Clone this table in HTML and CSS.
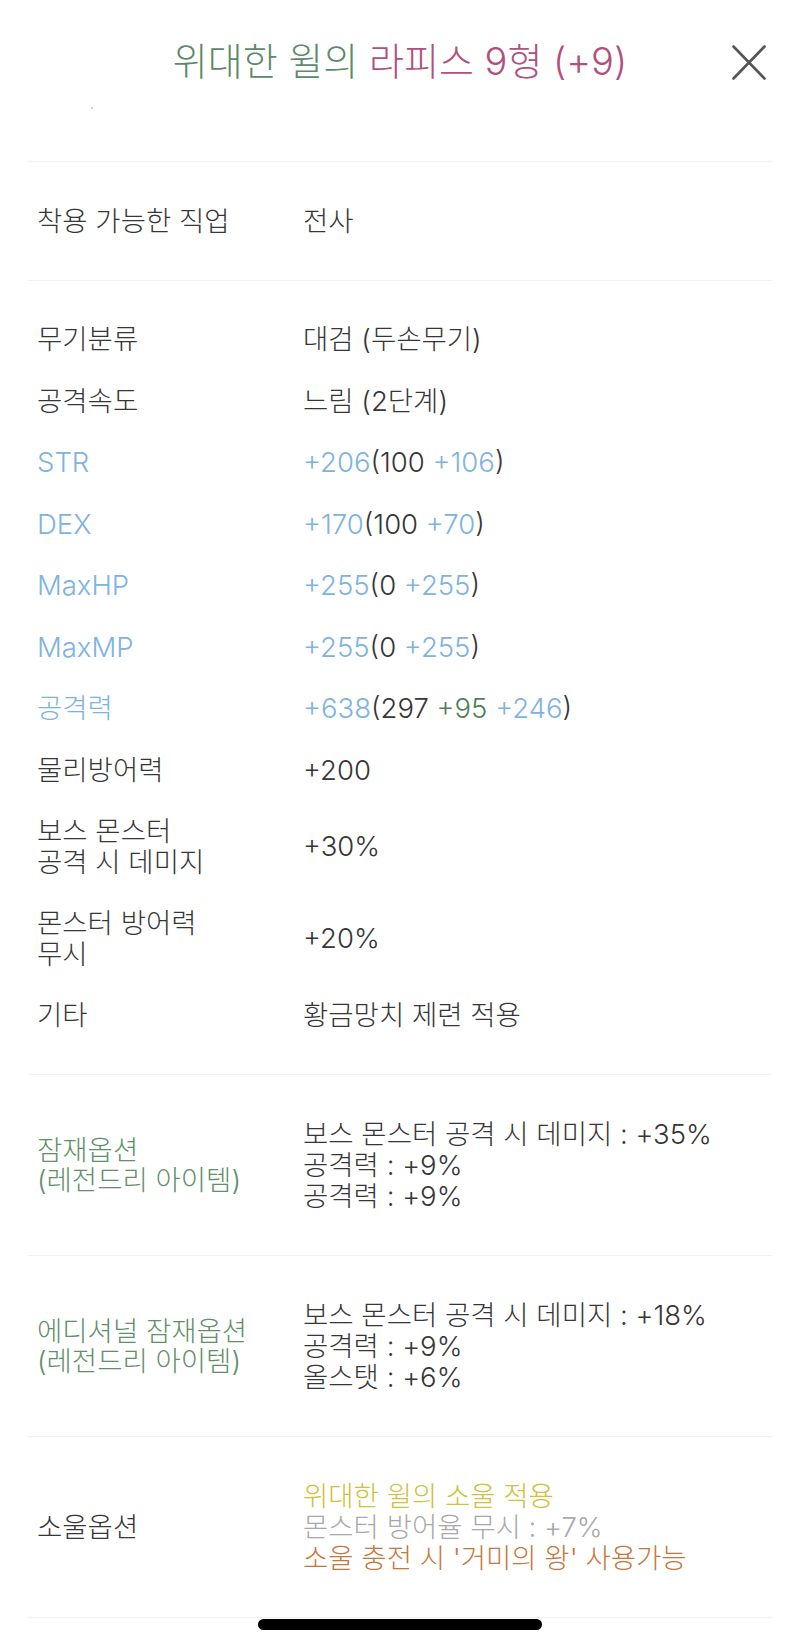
FILE: index.html
```html
<!DOCTYPE html>
<html lang="ko">
<head>
<meta charset="utf-8">
<title>위대한 윌의 라피스 9형 (+9)</title>
<link rel="stylesheet" href="styles.css">
</head>
<body>
<div class="page">
  <header class="header">
    <div class="side"></div>
    <h1 class="title"><span class="t-green">위대한 윌의</span> <span class="t-pink">라피스 9형 (+9)</span></h1>
    <div class="side side-right">
      <button class="close" aria-label="닫기">
        <svg width="34" height="35" viewBox="0 0 34 35"><path d="M1.5 1.5 L32.5 33.5 M32.5 1.5 L1.5 33.5" stroke="#555" stroke-width="2.6" fill="none" stroke-linecap="round"/></svg>
      </button>
    </div>
  </header>
  <div class="dot-line"><span class="dot"></span></div>

  <section class="section">
    <div class="row"><div class="label">착용 가능한 직업</div><div class="value">전사</div></div>
  </section>

  <section class="section">
    <div class="row"><div class="label">무기분류</div><div class="value">대검 (두손무기)</div></div>
    <div class="row"><div class="label">공격속도</div><div class="value">느림 (2단계)</div></div>
    <div class="row"><div class="label blue">STR</div><div class="value"><span class="blue">+206</span>(100 <span class="blue">+106</span>)</div></div>
    <div class="row"><div class="label blue">DEX</div><div class="value"><span class="blue">+170</span>(100 <span class="blue">+70</span>)</div></div>
    <div class="row"><div class="label blue">MaxHP</div><div class="value"><span class="blue">+255</span>(0 <span class="blue">+255</span>)</div></div>
    <div class="row"><div class="label blue">MaxMP</div><div class="value"><span class="blue">+255</span>(0 <span class="blue">+255</span>)</div></div>
    <div class="row"><div class="label blue">공격력</div><div class="value"><span class="blue">+638</span>(297 <span class="green">+95</span> <span class="blue">+246</span>)</div></div>
    <div class="row"><div class="label">물리방어력</div><div class="value">+200</div></div>
    <div class="row"><div class="label">보스 몬스터<br>공격 시 데미지</div><div class="value">+30%</div></div>
    <div class="row"><div class="label">몬스터 방어력<br>무시</div><div class="value">+20%</div></div>
    <div class="row"><div class="label">기타</div><div class="value">황금망치 제련 적용</div></div>
  </section>

  <section class="section">
    <div class="row multi"><div class="label lgreen">잠재옵션<br>(레전드리 아이템)</div><div class="value">보스 몬스터 공격 시 데미지 : +35%<br>공격력 : +9%<br>공격력 : +9%</div></div>
  </section>

  <section class="section">
    <div class="row multi"><div class="label lgreen">에디셔널 잠재옵션<br>(레전드리 아이템)</div><div class="value">보스 몬스터 공격 시 데미지 : +18%<br>공격력 : +9%<br>올스탯 : +6%</div></div>
  </section>

  <section class="section last">
    <div class="row multi"><div class="label">소울옵션</div><div class="value"><span class="yellow">위대한 윌의 소울 적용</span><br><span class="grey">몬스터 방어율 무시 : +7%</span><br><span class="orange">소울 충전 시 '거미의 왕' 사용가능</span></div></div>
  </section>

  <div class="home-bar"></div>
</div>
</body>
</html>
```

FILE: styles.css
```css
html, body {
  margin: 0;
  padding: 0;
  background: #ffffff;
}

body {
  font-family: "Inter", "Noto Sans CJK KR", "Noto Sans", sans-serif;
  font-weight: 300;
  color: #363636;
}

.page {
  position: relative;
  width: 800px;
  height: 1646px;
  overflow: hidden;
}

.header {
  display: grid;
  grid-template-columns: 1fr auto 1fr;
  align-items: center;
  padding-top: 38px;
  height: 45px;
}

.title {
  margin: 0;
  font-size: 38px;
  font-weight: 300;
  line-height: 44px;
  letter-spacing: 0;
  white-space: nowrap;
}

.t-green { color: #5b8b69; }
.t-pink { color: #b24f7d; }

.side-right {
  display: flex;
  justify-content: flex-end;
  padding-right: 34px;
}

.close {
  display: block;
  border: 0;
  background: none;
  padding: 0;
  width: 34px;
  height: 35px;
  margin-top: 4px;
}

.close svg { display: block; }

.dot-line {
  height: 54px;
  padding-top: 24px;
  padding-left: 91px;
}

.dot {
  display: block;
  width: 2px;
  height: 2px;
  background: #c8c8c8;
  border-radius: 1px;
}

.section {
  margin: 0 28px;
  border-top: 1.5px solid #f1f1f1;
  padding: 28px 0;
}

.section.last {
  border-bottom: 1.5px solid #f1f1f1;
}

.row {
  display: grid;
  grid-template-columns: 266px 1fr;
  align-items: center;
  padding: 15.5px 9px;
  font-size: 27.5px;
  line-height: 30.5px;
}

.row.multi .value {
  line-height: 31px;
}

.label, .value {
  white-space: nowrap;
}

.blue { color: #7db3e3; }
.green { color: #4f7f56; }
.lgreen { color: #5f906b; }
.yellow { color: #d0c03a; }
.grey { color: #a9a9a9; }
.orange { color: #c6773d; }

.home-bar {
  position: absolute;
  left: 258px;
  top: 1619px;
  width: 284px;
  height: 11px;
  border-radius: 6px;
  background: #000;
}
```
